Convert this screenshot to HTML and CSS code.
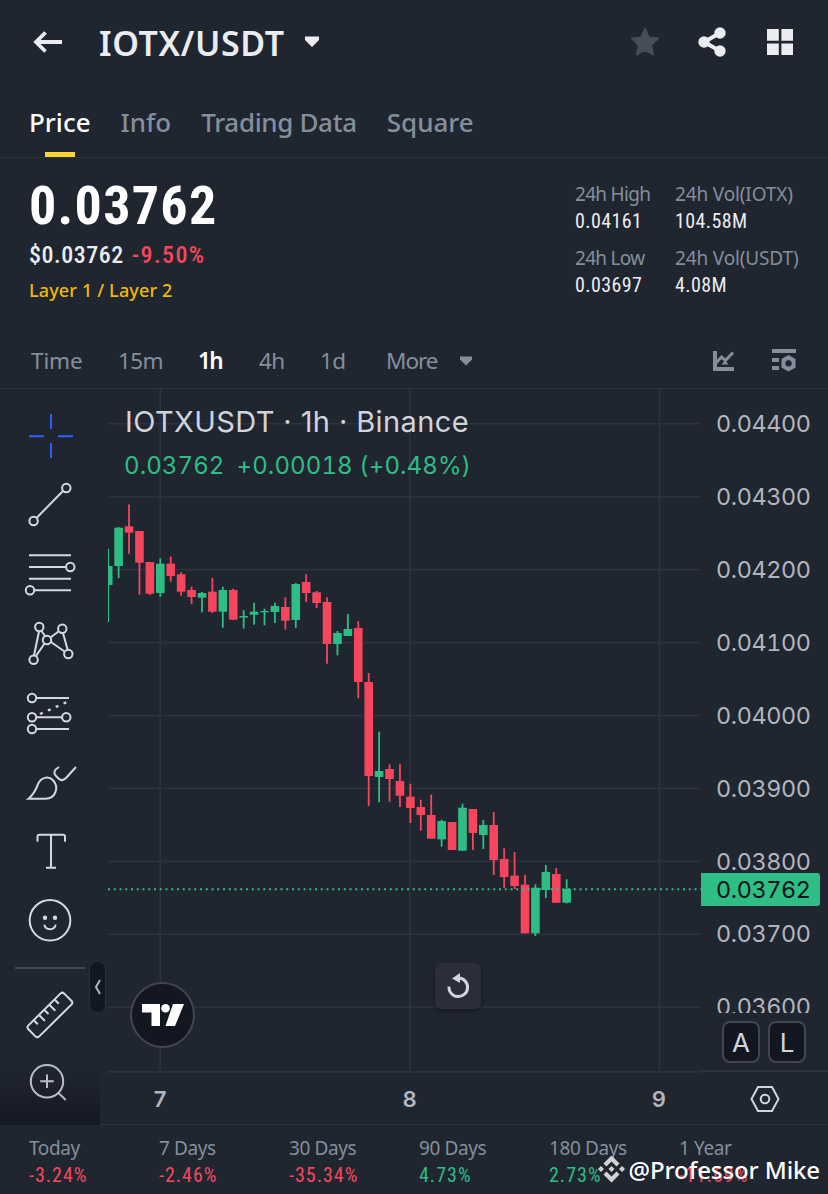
FILE: index.html
```html
<!DOCTYPE html>
<html lang="en">
<head>
    <meta charset="UTF-8">
    <meta name="viewport" content="width=device-width, initial-scale=1.0">
    <title>IOTX/USDT</title>
    <link rel="stylesheet" href="styles.css">
</head>
<body>
    <header class="header">
        <div class="title-bar">
            <svg class="back" width="30" height="24" viewBox="0 0 30 24"><path d="M29 12H3M12.500 2.500L3 12l9.500 9.500" /></svg>
            <h1>IOTX/USDT</h1>
            <svg class="caret" width="16" height="12" viewBox="0 0 16 12"><path d="M1 .5h14v3.5L8 11 1 4z" /></svg>
            <div class="actions">
                <svg width="30" height="30" viewBox="0 0 30 30"><path class="star" d="M15 1.800l3.800 8.800 9.200 1-6.900 6.300 2 9.600L15 22.800 6.900 27.500l2-9.600L2 11.600l9.200-1z" /></svg>
                <svg width="30" height="30" viewBox="0 0 30 30"><path class="share-line" d="M23 6L7 15l16 9" /><circle cx="23" cy="6" r="5.700" /><circle cx="7" cy="15" r="5.700" /><circle cx="23" cy="24" r="5.700" /></svg>
                <svg class="apps" width="26" height="26" viewBox="0 0 26 26"><path d="M0 0h11.800v11.800H0zM14.400 0H26v11.800H14.400zM0 14.400h11.800V26H0zM14.400 14.400H26V26H14.400z" /></svg>
            </div>
        </div>
        <nav class="tabs">
            <a class="tab active">Price</a>
            <a class="tab">Info</a>
            <a class="tab wide">Trading Data</a>
            <a class="tab">Square</a>
        </nav>
    </header>

    <section class="summary">
        <div class="quote">
            <div class="last-price">0.03762</div>
            <div class="fiat">$0.03762 <span class="down">-9.50%</span></div>
            <div class="category">Layer 1 / Layer 2</div>
        </div>
        <dl class="stats">
            <div><dt class="short">24h High</dt><dd>0.04161</dd></div>
            <div><dt>24h Vol(IOTX)</dt><dd>104.58M</dd></div>
            <div><dt class="short">24h Low</dt><dd>0.03697</dd></div>
            <div><dt>24h Vol(USDT)</dt><dd>4.08M</dd></div>
        </dl>
    </section>

    <div class="intervals">
        <span class="time">Time</span>
        <span class="m15">15m</span>
        <span class="h1 active">1h</span>
        <span class="h4">4h</span>
        <span class="d1">1d</span>
        <span class="more">More</span>
        <svg width="14" height="10" viewBox="0 0 14 10"><path d="M1 .5h12v3L7 9.500 1 3.500z" /></svg>
        <div class="interval-tools">
            <svg width="22" height="22" viewBox="0 0 22 22"><path d="M0 1h4v16h17v4H0z" /><path class="line" d="M2 14l6.500-7 4 3.500L20 2.500" /><path d="M12 10l3.500 4.500h-7z" /></svg>
            <svg width="26" height="24" viewBox="0 0 26 24"><path d="M1 0h24v4H1zM1 9h7v4H1zM1 17h7v4H1z" /><path fill-rule="evenodd" d="M17.500 6l7 4v8.500l-7 4-7-4V10zM17.500 11a3.300 3.300 0 1 0 .01 0z" /></svg>
        </div>
    </div>

    <main class="chart">
        <aside class="draw-tools">
            <svg class="cross" viewBox="0 0 100 69"><path d="M51 12v15M51 41v15M29 34.300h15M58 34.300h15" /></svg>
            <svg viewBox="0 0 100 69"><path d="M36.500 47L63 20" /><circle cx="66.300" cy="17" r="4.200" /><circle cx="33.600" cy="50" r="4.200" /></svg>
            <svg viewBox="0 0 100 69"><path d="M29 15.300h42M29 27h37M29 38.700h42M34 50.300h37" /><circle cx="70.300" cy="27" r="4.200" /><circle cx="30" cy="50.300" r="4.200" /></svg>
            <svg viewBox="0 0 100 69"><path d="M39 22.500l-5 24M41.500 22l3.500 5M44.500 34.500L36 47M50.500 28.500l8-6M51 33l13.500 9.500M63 24l4.700 17" /><circle cx="39.300" cy="18" r="4.200" /><circle cx="62.300" cy="19.700" r="4.200" /><circle cx="47" cy="31" r="4.200" /><circle cx="68.300" cy="45" r="4.200" /><circle cx="33.600" cy="50.700" r="4.200" /></svg>
            <svg viewBox="0 0 100 69"><path d="M36 20h33M36 39.300h26M36 51h33" /><path class="dots" d="M40 36l27-12" /><circle cx="32" cy="20" r="4.200" /><circle cx="32" cy="39.300" r="4.200" /><circle cx="66.300" cy="39.300" r="4.200" /><circle cx="32" cy="51" r="4.200" /></svg>
            <svg viewBox="0 0 100 69"><path d="M28.500 51.700c5-4 7.500-9 9.500-14.500 3-7 10.500-8.500 15-4 6.500 7 2.500 18.500-7.500 18.500zM59 20c-5 3-6 6-3 9l2.500 2.500c2.500 2.500 5 2 7.500-.5l10-11" /></svg>
            <svg viewBox="0 0 100 69"><path d="M37.500 25.700v-5q0-2 2-2h23.500q2 0 2 2v5M51 19v32.700M46 51.700h10" /></svg>
            <svg viewBox="0 0 100 69"><circle cx="50" cy="35.300" r="20.300" /><path d="M44.300 39.700c1 6 10.400 6 11.400 0" /><circle class="eye" cx="45" cy="32.700" r="2.200" /><circle class="eye" cx="55" cy="32.700" r="2.200" /></svg>
            <hr>
            <svg viewBox="0 0 100 69"><path d="M60.600 13.400q1.700-1.500 3.400 0l7.600 7.600q1.500 1.700 0 3.400L39 56.600q-1.700 1.500-3.400 0L28.200 49q-1.500-1.700 0-3.400zM34 40.500l3.800 3.800M39.500 35.500l5.500 5.500M44.700 30.200l3.800 3.800M49.800 25.200l5.500 5.500M55 20l3.800 3.800" /></svg>
            <svg class="zoom-tool" viewBox="0 0 100 75"><circle cx="47" cy="32.300" r="16.200" /><path d="M47 25.500v13.600M40.200 32.300h13.600M58.500 44l7.200 7" /></svg>
        </aside>

        <div class="plot">
            <svg id="candles" width="593" height="736" viewBox="108 389 593 736"></svg>
            <div class="legend">
                <div class="symbol">IOTXUSDT · 1h · Binance</div>
                <div class="values"><span>0.03762</span><span>+0.00018 (+0.48%)</span></div>
            </div>
            <button class="collapse"><svg width="8" height="16" viewBox="0 0 8 16"><path d="M6 1L2 8l4 7" /></svg></button>
            <div class="tv-logo"><svg width="42" height="22" viewBox="0 0 42 22"><path d="M0 0h18v22H9.500V8.500H0zM31 0h11l-9 22H23.500z" /><circle cx="23.500" cy="4.300" r="4.300" /></svg></div>
            <button class="reset"><svg width="24" height="26" viewBox="0 0 24 26"><path class="arc" d="M3 13.500a9.300 9.300 0 1 0 9.300-8.500" /><path d="M14 0v10L6 5.500z" /></svg></button>
            <div class="days"><span>7</span><span>8</span><span>9</span></div>
        </div>

        <div class="axis">
            <div class="prices">
                <span>0.04400</span><span>0.04300</span><span>0.04200</span>
                <span>0.04100</span><span>0.04000</span><span>0.03900</span>
                <span>0.03800</span><span>0.03700</span><span>0.03600</span>
            </div>
            <div class="current">0.03762</div>
            <div class="scale-modes"><button>A</button><button>L</button></div>
            <div class="axis-settings"><svg width="30" height="28" viewBox="0 0 30 28"><path d="M8 2h14l6.500 12L22 26H8L1.500 14z" /><circle cx="15" cy="14" r="4.300" /></svg></div>
        </div>
    </main>

    <footer class="performance">
        <div><span>Today</span><b class="down">-3.24%</b></div>
        <div><span>7 Days</span><b class="down">-2.46%</b></div>
        <div><span>30 Days</span><b class="down">-35.34%</b></div>
        <div><span>90 Days</span><b class="up">4.73%</b></div>
        <div><span>180 Days</span><b class="up">2.73%</b></div>
        <div><span>1 Year</span><b class="down">-11.69%</b></div>
    </footer>
    <div class="watermark">
        <svg width="27" height="28" viewBox="0 0 28 28"><path d="M14 0l8.300 8.300-3.100 3.100L14 6.200l-5.200 5.200-3.100-3.100zM3.100 10.900L6.200 14l-3.100 3.100L0 14zM14 10.900l3.100 3.100-3.100 3.100-3.100-3.100zM24.900 10.900L28 14l-3.100 3.100-3.100-3.100zM14 28l-8.300-8.300 3.100-3.100 5.200 5.200 5.200-5.200 3.100 3.100z" /></svg>
        <span>@Professor Mike</span>
    </div>

    <script>
        const svg = document.getElementById('candles');
        const UP = '#2ebd85';
        const DOWN = '#f6465d';
        const STEP = 10.42;

        // direction, high, body top, body bottom, low
        const CANDLES = [
            [1, 548.7, 566, 585, 622], [1, 527, 527.7, 566, 578],
            [0, 504.5, 526.3, 532.7, 553.7], [0, 531, 531, 562.7, 594.7],
            [0, 562, 562, 593.7, 595], [1, 558.3, 563.7, 593, 596.7],
            [0, 556.5, 563.7, 576, 581.7], [0, 572.3, 574.3, 591.7, 595.7],
            [0, 586.7, 590, 597, 604], [1, 592, 593, 597.7, 612.3],
            [0, 578, 591.7, 611.7, 613], [1, 586.7, 590, 611.7, 627.7],
            [0, 588.7, 590, 619.7, 619.7], [1, 610.3, 616, 617.5, 628.5],
            [1, 602.7, 611.7, 614.7, 624.7], [1, 608.7, 611, 612.3, 625.3],
            [1, 602.7, 606, 612, 623], [0, 597.3, 607, 620.7, 629.7],
            [1, 583, 584, 620, 628], [0, 574.3, 582, 593, 602],
            [0, 591, 592.3, 603, 608], [0, 597.3, 602, 644, 663.7],
            [1, 631, 633, 644, 655.3], [1, 614, 629, 636, 636],
            [0, 621.3, 628, 682, 698.3], [0, 673, 682, 776, 806],
            [1, 731.7, 771, 777, 802.3], [0, 764.3, 769, 779, 801.7],
            [0, 764.3, 781, 795.7, 807], [0, 783.7, 796.7, 808, 823],
            [0, 799.7, 807, 815, 830.7], [0, 794.7, 815, 838.7, 838.7],
            [1, 819.7, 821, 839.3, 846.7], [0, 822, 822, 850, 850],
            [1, 803.7, 807.7, 850.7, 850.7], [0, 809, 809, 833, 850],
            [1, 820, 825, 835, 849], [0, 812, 825, 860, 875],
            [0, 848.3, 859, 877, 888], [0, 852, 875.7, 886, 889],
            [0, 875, 884.7, 933.3, 933.3], [1, 884.3, 887.7, 933.3, 936],
            [1, 865, 872, 890, 898], [0, 868, 874, 902.7, 902.7],
            [1, 879.3, 889, 902.7, 903.3]
        ];

        function line(x1, y1, x2, y2, cls) {
            return `<line x1="${x1}" y1="${y1}" x2="${x2}" y2="${y2}" class="${cls}" />`;
        }

        function drawGrid() {
            let out = '';
            for (let i = 0; i < 9; i++) {
                const y = 423.8 + i * 72.93;
                out += line(108, y, 701, y, 'grid');
            }
            [160.2, 409.8, 659.5].forEach(x => {
                out += line(x, 389, x, 1071, 'grid');
            });
            return out + line(108, 1071.9, 701, 1071.9, 'grid');
        }

        function drawCandles() {
            return CANDLES.map(([up, high, top, bottom, low], i) => {
                const x = 108.2 + i * STEP;
                const color = up ? UP : DOWN;
                return `<g fill="${color}">
                    <rect x="${x - 0.9}" y="${high}" width="1.8" height="${low - high}" />
                    <rect x="${x - 4.3}" y="${top}" width="8.6" height="${bottom - top}" />
                </g>`;
            }).join('');
        }

        svg.innerHTML = drawGrid() + drawCandles() + line(108, 889.3, 701, 889.3, 'last');
    </script>
</body>
</html>
```
FILE: styles.css
```css
* {
    box-sizing: border-box;
    margin: 0;
    padding: 0;
}

body {
    width: 828px;
    height: 1194px;
    overflow: hidden;
    position: relative;
    background-color: #202630;
    color: #eaecef;
    font-family: 'Noto Sans', sans-serif;
}

svg {
    display: block;
    flex: none;
}

button {
    border: none;
    font-family: inherit;
    display: flex;
    align-items: center;
    justify-content: center;
}

.down {
    color: #f6465d;
}

.up {
    color: #2ebd85;
}

/* header */
.header {
    height: 158px;
    border-bottom: 1px solid #2d343e;
}

.title-bar {
    display: flex;
    align-items: center;
    height: 84px;
    padding: 0 35px 0 33px;
    fill: #eaecef;
}

.back {
    fill: none;
    stroke: #eaecef;
    stroke-width: 3.8;
}

.title-bar h1 {
    width: 186px;
    margin: 0 19px 0 36px;
    padding-top: 2px;
    font-size: 34px;
    font-weight: 600;
    letter-spacing: 0.6px;
    white-space: nowrap;
}

.actions {
    display: flex;
    align-items: center;
    gap: 37px;
    margin-left: auto;
}

.apps {
    margin-left: 3px;
}

.star {
    fill: #474d57;
    stroke: #474d57;
    stroke-width: 2;
    stroke-linejoin: round;
}

.share-line {
    fill: none;
    stroke: #eaecef;
    stroke-width: 4;
}

.tabs {
    display: flex;
    gap: 30px;
    height: 73px;
    padding-left: 29px;
}

.tab {
    position: relative;
    height: 73px;
    line-height: 76px;
    font-size: 26px;
    font-weight: 500;
    color: #848e9c;
}

.tab.wide {
    letter-spacing: -0.35px;
}

.tab.active {
    color: #fff;
}

.tab.active::after {
    content: '';
    position: absolute;
    left: 16px;
    bottom: 0;
    width: 30px;
    height: 5px;
    background-color: #fcd535;
}

/* summary */
.summary {
    display: flex;
    justify-content: space-between;
    height: 176px;
    padding: 0 24px 0 29px;
}

.last-price {
    margin-top: 13px;
    height: 69px;
    line-height: 70px;
    font-family: Roboto, sans-serif;
    font-stretch: 85%;
    font-size: 54px;
    font-weight: 700;
    letter-spacing: 1.3px;
    color: #fff;
}

.fiat {
    height: 32px;
    line-height: 31px;
    font-family: Roboto, sans-serif;
    font-stretch: 85%;
    font-size: 24px;
    font-weight: 500;
    letter-spacing: 0.5px;
}

.fiat .down {
    margin-left: 2px;
    letter-spacing: 1.4px;
}

.category {
    margin-top: 1px;
    line-height: 34px;
    font-size: 18px;
    font-weight: 500;
    letter-spacing: 0.15px;
    color: #f0b90b;
}

.stats {
    display: grid;
    grid-template-columns: 100px 129px;
    grid-auto-rows: 63.5px;
    padding-top: 22px;
    font-size: 19px;
}

.stats dt {
    line-height: 28px;
    letter-spacing: -0.15px;
    color: #848e9c;
}

.stats .short {
    letter-spacing: -0.7px;
}

.stats dd {
    line-height: 27px;
    font-family: Roboto, sans-serif;
    font-stretch: 85%;
    font-size: 20px;
    letter-spacing: 0.4px;
    color: #eaecef;
}

/* intervals */
.intervals {
    display: flex;
    align-items: center;
    height: 55px;
    padding: 0 31px 1px;
    border-bottom: 1px solid #2d343e;
    font-size: 22.5px;
    letter-spacing: -0.6px;
    color: #848e9c;
    fill: #848e9c;
}

.time {
    width: 87px;
    letter-spacing: -0.1px;
}

.m15 {
    width: 80px;
}

.h1 {
    width: 61px;
}

.h4 {
    width: 61px;
}

.d1 {
    width: 66px;
}

.more {
    width: 73px;
    letter-spacing: -1px;
}

.intervals .active {
    color: #fff;
    font-weight: 600;
    letter-spacing: -1.5px;
}

.interval-tools {
    display: flex;
    align-items: center;
    gap: 36px;
    margin-left: auto;
}

.interval-tools .line {
    fill: none;
    stroke: #848e9c;
    stroke-width: 3;
}

/* chart */
.chart {
    display: grid;
    grid-template-columns: 108px 593px 127px;
    height: 736px;
    border-bottom: 1px solid #2d343e;
    font-family: Inter, sans-serif;
    font-variant-numeric: tabular-nums;
}

.draw-tools {
    width: 100px;
    padding-top: 13px;
    background: linear-gradient(#202630 92%, #151924 99.5%);
}

.draw-tools svg {
    width: 100px;
    height: 69px;
    fill: none;
    stroke: #d5d8e0;
    stroke-width: 2;
}

.draw-tools .cross {
    stroke: #2962ff;
}

.draw-tools .dots {
    stroke-width: 2.4;
    stroke-dasharray: 3 5.6;
}

.draw-tools .eye {
    fill: #d5d8e0;
    stroke: none;
}

.draw-tools hr {
    width: 70px;
    height: 2px;
    margin: 13px 0 11px 15px;
    border: none;
    background-color: #434651;
}

.draw-tools .zoom-tool {
    height: 75px;
    opacity: 0.85;
}

.plot,
.axis {
    position: relative;
}

.grid {
    stroke: #2d333e;
    stroke-width: 1.6;
}

.last {
    stroke: #2ebd85;
    stroke-width: 2;
    stroke-dasharray: 2 3.75;
}

.legend {
    position: absolute;
    top: 14px;
    left: 16px;
    white-space: nowrap;
}

.symbol {
    padding-left: 1px;
    line-height: 38px;
    font-size: 29px;
    letter-spacing: 0.4px;
    font-variant-numeric: normal;
    color: #d1d4dc;
}

.values {
    display: flex;
    gap: 12px;
    margin-top: 6px;
    line-height: 38px;
    font-size: 24px;
    letter-spacing: 0.1px;
    color: #2ebd85;
}

.collapse {
    position: absolute;
    left: -19px;
    top: 572px;
    width: 17px;
    height: 52px;
    border: 1px solid #2a2e39;
    border-radius: 8px;
    background-color: #131722;
}

.collapse svg {
    fill: none;
    stroke: #b2b5be;
    stroke-width: 2;
}

.tv-logo {
    position: absolute;
    left: 22px;
    top: 593px;
    width: 65px;
    height: 66px;
    display: flex;
    align-items: center;
    justify-content: center;
    border: 2px solid #434651;
    border-radius: 50%;
    background-color: #131722;
    fill: #fff;
}

.reset {
    position: absolute;
    left: 327px;
    top: 574px;
    width: 46px;
    height: 46px;
    border-radius: 6px;
    background-color: #2a2e39;
    box-shadow: 0 2px 5px rgba(0, 0, 0, 0.4);
    fill: #d1d4dc;
}

.reset .arc {
    fill: none;
    stroke: #d1d4dc;
    stroke-width: 3;
}

.days {
    position: absolute;
    left: 0;
    bottom: 0;
    width: 602px;
    height: 51px;
    display: flex;
    justify-content: space-between;
    padding: 0 44px 0 45px;
    line-height: 51px;
    font-size: 22px;
    font-weight: 600;
    color: #b2b5be;
}

.axis {
    color: #b2b5be;
}

.prices {
    height: 624px;
    overflow: hidden;
    padding-left: 15px;
    font-size: 23.4px;
    letter-spacing: -0.4px;
}

.prices span {
    display: block;
    height: 72.93px;
    line-height: 72.93px;
    position: relative;
    top: -1px;
}

.current {
    position: absolute;
    left: 0;
    top: 484px;
    width: 119px;
    height: 33px;
    padding-left: 15px;
    border-radius: 0 3px 3px 0;
    background-color: #2ebd85;
    line-height: 33px;
    font-size: 23.4px;
    letter-spacing: -0.4px;
    color: #10151c;
}

.scale-modes {
    display: flex;
    gap: 8px;
    height: 59px;
    padding: 8px 0 0 21px;
    border-bottom: 2px solid #2d333e;
}

.scale-modes button {
    width: 38px;
    height: 42px;
    border: 2px solid #434651;
    border-radius: 8px;
    background-color: #131722;
    font-size: 26px;
    color: #d1d4dc;
}

.axis-settings {
    display: flex;
    padding: 13px 0 0 49px;
    fill: none;
    stroke: #d1d4dc;
    stroke-width: 2;
}

/* footer */
.performance {
    display: flex;
    padding: 9px 0 0 29px;
    font-size: 19px;
}

.performance div {
    flex: none;
    width: 130px;
}

.performance span {
    display: block;
    line-height: 28px;
    letter-spacing: -0.4px;
    color: #848e9c;
}

.performance b {
    display: block;
    line-height: 27px;
    font-family: Roboto, sans-serif;
    font-stretch: 85%;
    font-size: 20px;
    font-weight: 400;
    letter-spacing: 1px;
}

.watermark {
    position: absolute;
    right: 8px;
    bottom: 9px;
    display: flex;
    align-items: center;
    gap: 4px;
    height: 32px;
    fill: #d0d2d5;
    font-size: 24px;
    font-weight: 500;
    letter-spacing: -0.1px;
    color: #fff;
    white-space: nowrap;
}
```
